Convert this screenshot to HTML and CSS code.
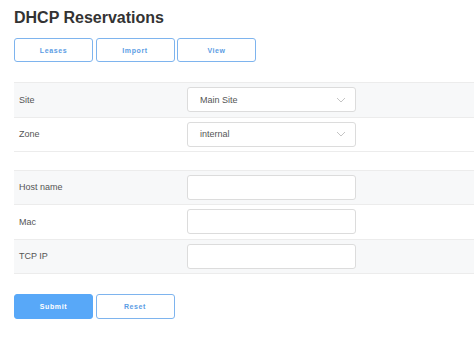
FILE: index.html
```html
<!DOCTYPE html>
<html>
  <head>
    <meta charset="UTF-8" />
    <title>DHCP Reservations</title>
    <link rel="stylesheet" href="styles.css">
  </head>
  <body>
    <h2 class="title">DHCP Reservations</h2>

    <div class="toolbar">
      <button class="btn">Leases</button>
      <button class="btn">Import</button>
      <button class="btn">View</button>
    </div>

    <table class="formtable">
      <tr class="odd">
        <td class="label">Site</td>
        <td>
          <div class="select">
            <span>Main Site</span>
            <svg width="10" height="6" viewBox="0 0 10 6"><path d="M1 1 L5 5 L9 1" fill="none" stroke="#c4c4c4" stroke-width="1"/></svg>
          </div>
        </td>
      </tr>
      <tr>
        <td class="label">Zone</td>
        <td>
          <div class="select">
            <span>internal</span>
            <svg width="10" height="6" viewBox="0 0 10 6"><path d="M1 1 L5 5 L9 1" fill="none" stroke="#c4c4c4" stroke-width="1"/></svg>
          </div>
        </td>
      </tr>
      <tr class="spacer"><td colspan="2"></td></tr>
      <tr class="odd">
        <td class="label">Host name</td>
        <td><input class="field" type="text"></td>
      </tr>
      <tr>
        <td class="label">Mac</td>
        <td><input class="field" type="text"></td>
      </tr>
      <tr class="odd">
        <td class="label">TCP IP</td>
        <td><input class="field" type="text"></td>
      </tr>
    </table>

    <div class="actions">
      <button class="btn primary">Submit</button>
      <button class="btn">Reset</button>
    </div>
  </body>
</html>
```

FILE: styles.css
```css
body {
  margin: 0;
  padding: 8px 0 0 14px;
  font-family: "Liberation Sans", Arial, sans-serif;
  color: #555;
}

.title {
  margin: 0;
  font-size: 16px;
  color: #333;
  line-height: 20px;
}

/* buttons */
.toolbar {
  display: flex;
  gap: 2.5px;
  margin-top: 10px;
}

.btn {
  width: 79px;
  height: 24px;
  border: 1px solid #7eb4ee;
  border-radius: 3px;
  background-color: #fff;
  color: #5b9de4;
  font-family: "Liberation Sans", Arial, sans-serif;
  font-size: 7px;
  font-weight: bold;
  letter-spacing: 0.6px;
  padding: 0;
}

.btn.primary {
  background-color: #58a8f8;
  border-color: #58a8f8;
  color: #fff;
}

/* form table */
.formtable {
  width: 100%;
  margin-top: 20px;
  border-collapse: collapse;
  font-size: 9px;
}

.formtable td {
  height: 33.5px;
  padding: 0;
  border-top: 1px solid #ececec;
  vertical-align: middle;
}

.formtable tr:last-child td {
  border-bottom: 1px solid #ececec;
}

.formtable tr.odd {
  background-color: #f7f8f9;
}

.formtable tr.spacer td {
  height: 17.5px;
}

.formtable td.label {
  width: 168px;
  padding-left: 5px;
}

.select, .field {
  box-sizing: border-box;
  width: 169px;
  height: 25px;
  border: 1px solid #dcdcdc;
  border-radius: 3px;
  background-color: #fff;
}

.select {
  display: flex;
  align-items: center;
  justify-content: space-between;
  padding: 0 9px 0 12px;
  color: #555;
}

.field {
  display: block;
}

.actions {
  display: flex;
  gap: 2.5px;
  margin-top: 20px;
}

.actions .btn {
  height: 25px;
}
```
